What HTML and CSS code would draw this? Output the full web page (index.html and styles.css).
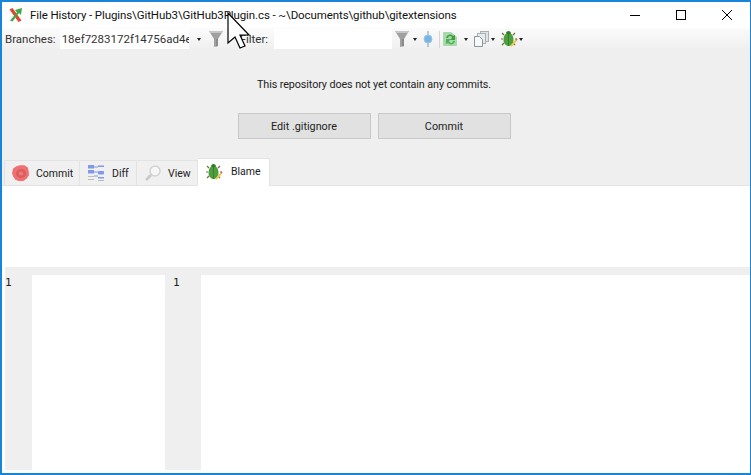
FILE: index.html
```html
<!DOCTYPE html>
<html lang="en">
<head>
<meta charset="utf-8">
<title>File History</title>
<link rel="stylesheet" href="styles.css">
</head>
<body>
<div class="window">
  <header class="titlebar">
    <svg class="app-icon" width="16" height="16" viewBox="0 0 16 16"><path d="M1.500 2.500l3-1.500 9 12.500-3 1.500z" fill="#e0452f"/><path d="M2 13.500l7-8-2-2.500 7-2-1 7-2-2-6.500 8.500z" fill="#3fa845"/></svg>
    <span class="title">File History - Plugins\GitHub3\GitHub3Plugin.cs - ~\Documents\github\gitextensions</span>
    <div class="caption">
      <span class="cap-btn"><svg width="12" height="12" viewBox="0 0 12 12"><path d="M1 6.500h10" stroke="#000" fill="none"/></svg></span>
      <span class="cap-btn"><svg width="12" height="12" viewBox="0 0 12 12"><rect x="1.500" y="1.500" width="9" height="9" stroke="#000" fill="none"/></svg></span>
      <span class="cap-btn"><svg width="12" height="12" viewBox="0 0 12 12"><path d="M1 1l10 10M11 1L1 11" stroke="#000" fill="none"/></svg></span>
    </div>
  </header>
  <div class="toolbar">
    <span class="label">Branches:</span>
    <span class="branch-input">18ef7283172f14756ad4e</span>
    <span class="caret caret-branch"></span>
    <svg class="funnel" width="16" height="18" viewBox="0 0 16 18"><use href="#funnel"/></svg>
    <span class="label filter-label">Filter:</span>
    <span class="filter-input"></span>
    <svg class="tool funnel-2" width="16" height="18" viewBox="0 0 16 18"><use href="#funnel"/></svg>
    <span class="caret"></span>
    <svg class="tool pin" width="12" height="18" viewBox="0 0 12 18"><path d="M6 1v16" stroke="#9dbad0" stroke-width="1.500"/><circle cx="6" cy="9" r="4" fill="#74b6ea" stroke="#a5c4da"/></svg>
    <span class="sep"></span>
    <svg class="tool" width="17" height="18" viewBox="0 0 17 18"><path d="M2 2h7l6 5v8a1 1 0 01-1 1H2a1 1 0 01-1-1V3a1 1 0 011-1z" fill="#a9d8a9"/><path d="M4 8a4 4 0 017-2l2-1 0 5-5 0 2-2a2 2 0 00-4 0z" fill="#3f9d45"/><path d="M13 11a4 4 0 01-7 2l-2 1 0-5 5 0-2 2a2 2 0 004 0z" fill="#4fb055"/></svg>
    <span class="caret caret-wide"></span>
    <svg class="tool" width="17" height="18" viewBox="0 0 17 18"><rect x="7.500" y="1.500" width="8" height="10" fill="#dfe4e6" stroke="#a8b0b4"/><rect x="4.500" y="3.500" width="8" height="10" fill="#e8ebec" stroke="#a8b0b4"/><path d="M1.500 6.500h5l3 3v7h-8z" fill="#f8f8f8" stroke="#8d969b"/></svg>
    <span class="caret caret-docs"></span>
    <svg class="tool" width="18" height="18" viewBox="0 0 18 18"><use href="#bug"/></svg>
    <span class="caret caret-bug"></span>
  </div>
  <section class="notice">
    <p class="notice-text">This repository does not yet contain any commits.</p>
    <div class="notice-actions">
      <span class="btn">Edit .gitignore</span>
      <span class="btn">Commit</span>
    </div>
  </section>
  <nav class="tabs">
    <span class="tab tab-commit">
      <svg width="18" height="18" viewBox="1 1 16 16"><path d="M8 2l4 0 3 2 1 4 0 3-2 3-3 2-4 0-3-1-2-3-1-3 1-4 3-2z" fill="#ee7072"/><ellipse cx="9" cy="9.500" rx="4.500" ry="4" fill="#dd5c5e"/><ellipse cx="9" cy="9.500" rx="2" ry="1.800" fill="#ea7a7c"/></svg>
      Commit
    </span>
    <span class="tab tab-diff">
      <svg width="18" height="18" viewBox="0 0 18 18"><g fill="#8298ea"><rect x="1" y="1" width="6" height="3.500"/><rect x="1" y="6" width="6" height="3.500"/><rect x="11" y="7" width="6" height="3.500" rx="1"/><rect x="11" y="1.500" width="6" height="1.500"/><rect x="11" y="13" width="6" height="1.500"/></g><path d="M7 3h4M7 8h4M7 12h4" stroke="#8298ea"/><rect x="1" y="12" width="6" height="1" fill="#bbb"/><rect x="1" y="15" width="6" height="1" fill="#bbb"/><rect x="11" y="16" width="6" height="1" fill="#bbb"/></svg>
      Diff
    </span>
    <span class="tab tab-view">
      <svg width="18" height="18" viewBox="0 0 18 18"><circle cx="11" cy="7" r="5" fill="#f6f6f6" stroke="#d2d2d2" stroke-width="1.500"/><path d="M7 11l-5 5" stroke="#c8c8c8" stroke-width="2.500"/></svg>
      View
    </span>
    <span class="tab tab-active">
      <svg width="18" height="18" viewBox="0 0 18 18"><use href="#bug"/></svg>
      Blame
    </span>
  </nav>
  <div class="blank"></div>
  <div class="strip"></div>
  <div class="panes">
    <div class="gutter">1</div>
    <div class="code"></div>
    <div class="gutter gutter-right">1</div>
    <div class="code"></div>
  </div>
  <svg class="defs" width="0" height="0"><defs>
    <g id="funnel"><path d="M1 1h14L10 9v7l-4 1V9z" fill="#a0a0a0"/><path d="M1 1h14l-1.500 2h-11z" fill="#c6c6c6"/><path d="M8 9h2v7l-2 .5z" fill="#8a8a8a"/></g>
    <g id="bug"><path d="M4 5L2 3M13 5l2-2M3 9H1M15 9h2M4 13l-2 2M13 13l2 2" stroke="#7a6a3c" fill="none" stroke-width="1.200"/><path d="M8.500 3c3 0 5 2.500 5 7 0 3.500-2.500 6-5 6s-5-2.500-5-6c0-4.500 2-7 5-7z" fill="#4e9e3e"/><path d="M6 3.500c0-1.500 1.200-2.500 2.500-2.500s2.500 1 2.500 2.500l-2.500 1z" fill="#2f7a2c"/><path d="M8.500 4v12" stroke="#357f30"/><path d="M10 16l5.500-6.500 1.500 1.200-5.500 6z" fill="#e9cb45"/><path d="M15.500 9.500l1-1 1.200 1-1 1.200z" fill="#dd6a60"/></g>
  </defs></svg>
  <svg class="cursor" width="24" height="38" viewBox="0 0 24 38"><path d="M1 1v30l7-6 5 11 5-2-5-11h9z" fill="#fff" stroke="#000" stroke-width="1.200"/></svg>
</div>
</body>
</html>
```
FILE: styles.css
```css
* { box-sizing: border-box; }
html, body { margin: 0; padding: 0; }
body { font-family: Roboto, "Open Sans", sans-serif; font-size: 11px; color: #222; background: #fff; }
.window { position: relative; width: 751px; height: 475px; border: 2px solid #1a84d8; border-right-width: 1px; display: flex; flex-direction: column; background: #fff; overflow: hidden; }
.titlebar { height: 26px; flex: none; display: flex; align-items: center; background: #fff; padding-left: 6px; }
.app-icon { margin-right: 6px; }
.title { font-size: 11.500px; letter-spacing: -0.1px; color: #111; white-space: nowrap; }
.caption { margin-left: auto; display: flex; }
.cap-btn { width: 46px; height: 26px; display: flex; align-items: center; justify-content: center; }
.toolbar { height: 22px; flex: none; display: flex; align-items: center; background: linear-gradient(#fbfbfb, #efefef); padding-left: 3px; }
.label { color: #333; font-size: 11.500px; }
.branch-input { width: 129px; height: 20px; margin-left: 4px; padding-left: 2px; line-height: 20px; background: #fff; overflow: hidden; white-space: nowrap; font-size: 11.500px; color: #333; }
.caret { flex: none; width: 0; height: 0; margin: 0 3px; border-left: 2.500px solid transparent; border-right: 2.500px solid transparent; border-top: 3px solid #222; }
.caret-branch { margin-left: 8px; }
.caret-wide { margin: 0 5px; }
.caret-docs { margin: 0 5px 0 1px; }
.caret-bug { margin-left: 1px; }
.funnel { margin-left: 4px; }
.filter-label { margin-left: 16px; }
.filter-input { width: 118px; height: 20px; margin-left: 6px; background: #fff; }
.funnel-2 { margin-left: 2px; }
.tool { flex: none; }
.pin { margin-left: 2px; }
.sep { width: 1px; height: 17px; margin: 0 2px 0 5px; background: #d5d5d5; }
.notice { height: 108px; flex: none; background: #efefef; display: flex; flex-direction: column; align-items: center; padding: 28px 4px 0 0; }
.notice-text { margin: 0; height: 14px; line-height: 14px; font-size: 10.800px; letter-spacing: -0.1px; color: #222; }
.notice-actions { display: flex; gap: 7px; margin-top: 21px; }
.btn { width: 133px; height: 26px; border: 1px solid #c8c8c8; background: #e1e1e1; display: flex; align-items: center; justify-content: center; font-size: 10.800px; color: #222; }
.tabs { height: 28px; flex: none; display: flex; align-items: flex-end; background: #efefef; border-bottom: 1px solid #e3e3e3; padding-left: 2px; }
.tab { height: 25px; display: flex; align-items: center; gap: 6px; background: #f0f0f0; border: 1px solid #e3e3e3; border-left: none; border-bottom: none; font-size: 10.500px; color: #222; padding-left: 7px; }
.tab-commit { width: 76px; border-left: 1px solid #e3e3e3; }
.tab-diff { width: 57px; gap: 7px; }
.tab-view { width: 61px; }
.tab-active { width: 72px; height: 28px; margin-bottom: -1px; background: #fff; padding-bottom: 2px; gap: 8px; position: relative; }
.blank { height: 81px; flex: none; background: #fff; }
.strip { height: 8px; flex: none; background: #efefef; margin-left: 3px; }
.panes { flex: 1; display: grid; grid-template-columns: 27px 133px 36px 1fr; margin-left: 3px; margin-bottom: 3px; }
.gutter { background: #efefef; font-family: "DejaVu Sans Mono", monospace; font-size: 11px; color: #222; line-height: 14px; padding-top: 1px; }
.gutter-right { padding-left: 8px; }
.code { background: #fff; }
.defs { position: absolute; }
.cursor { position: absolute; left: 225px; top: 10px; }
```
